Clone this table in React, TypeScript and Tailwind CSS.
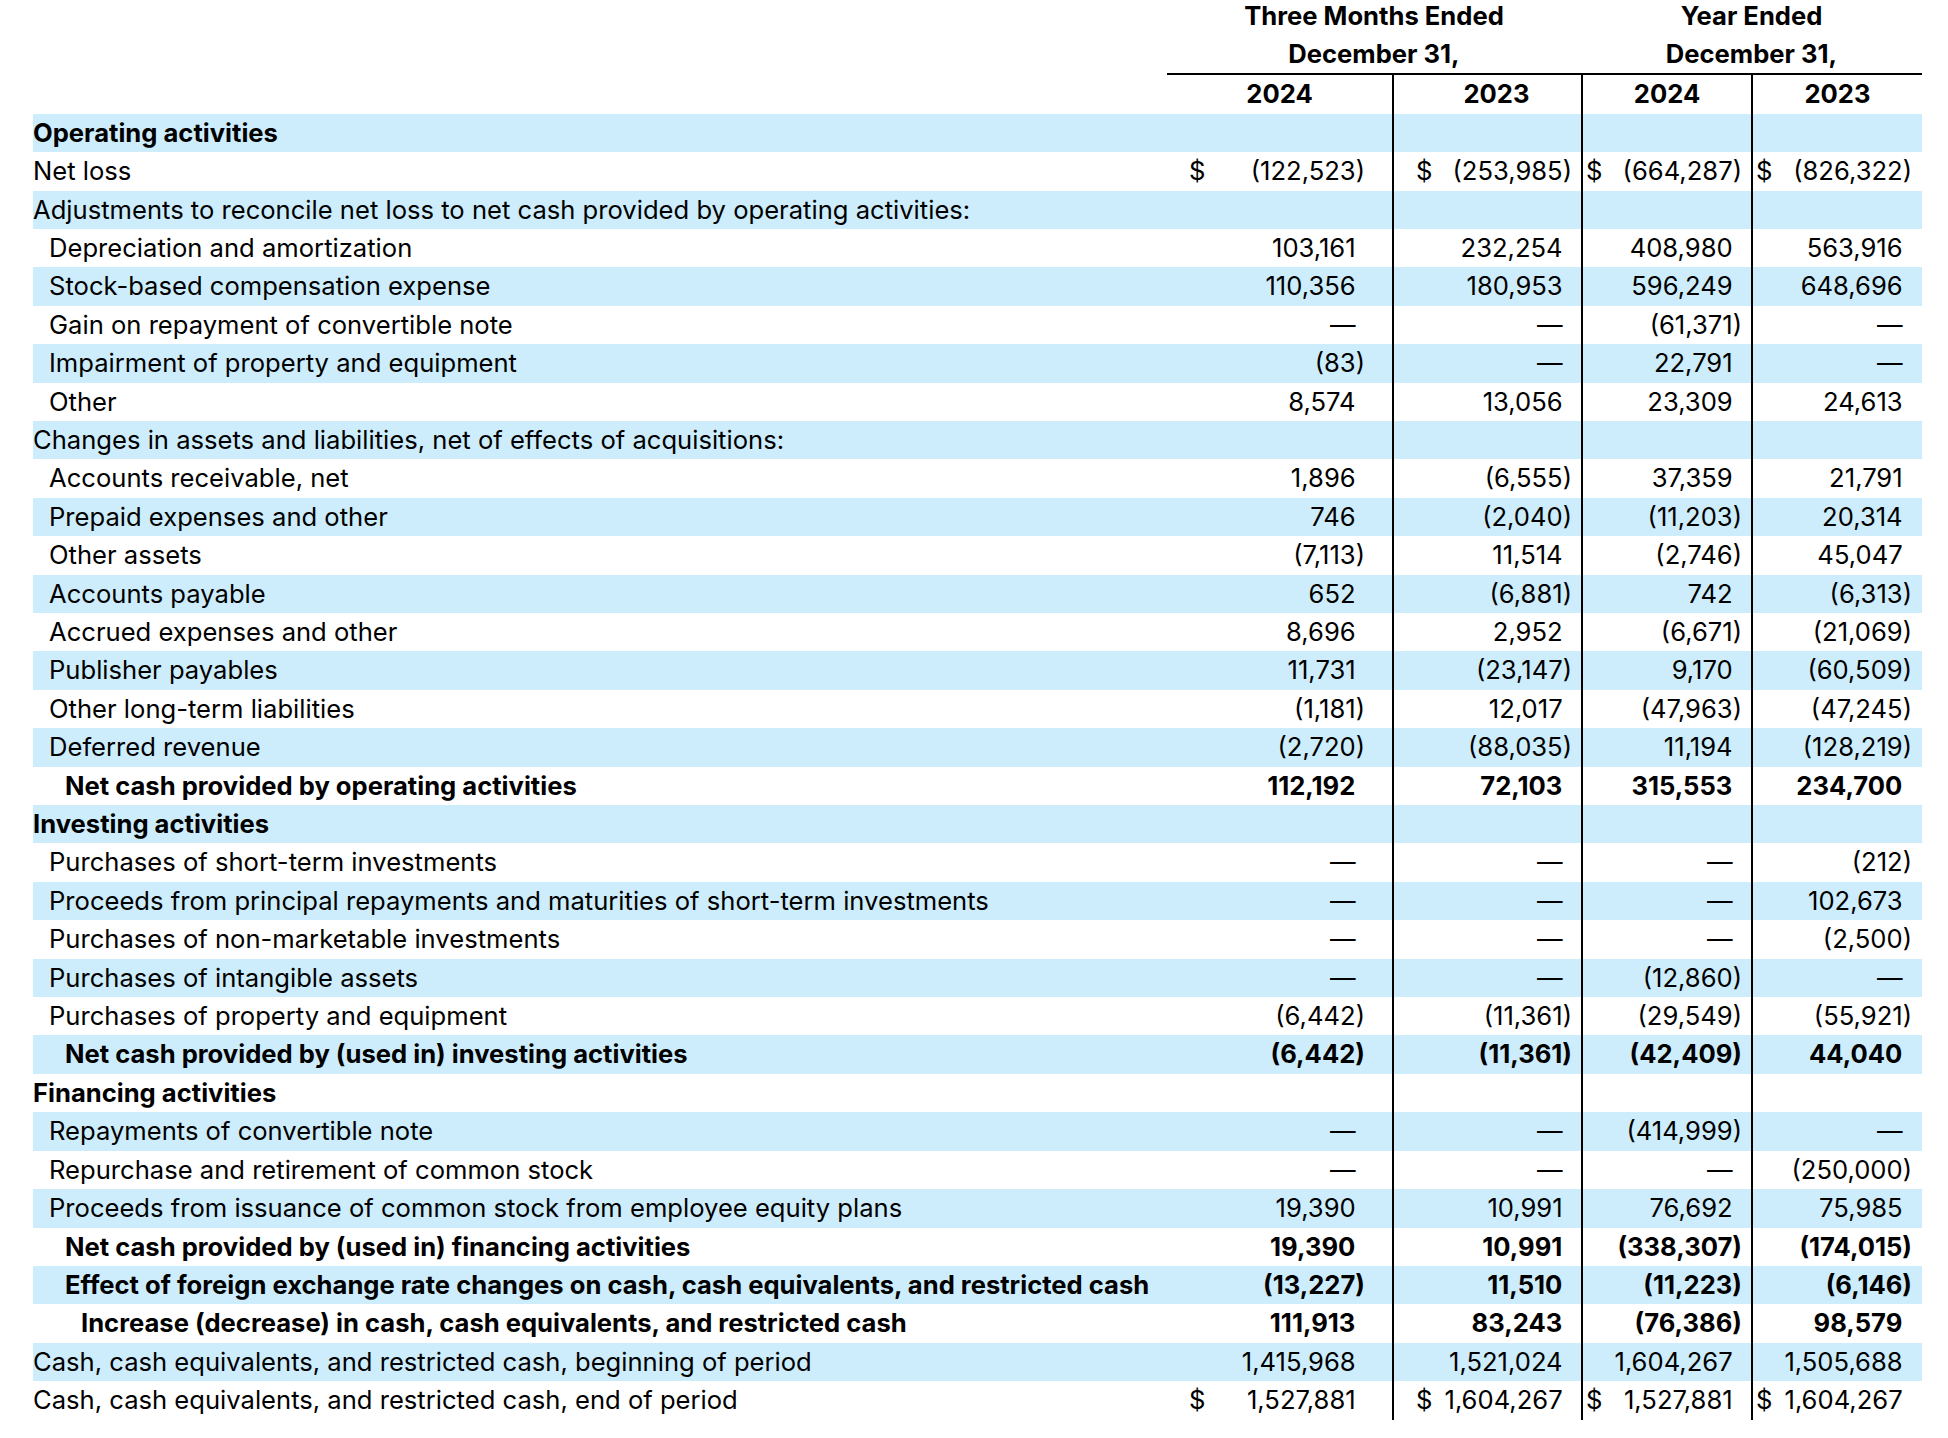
type Row = {
  label: string;
  level?: number;
  bold?: boolean;
  values?: string[];
  dollar?: boolean;
};

const rows: Row[] = [
  { label: 'Operating activities', bold: true },
  { label: 'Net loss', values: ['(122,523)', '(253,985)', '(664,287)', '(826,322)'], dollar: true },
  { label: 'Adjustments to reconcile net loss to net cash provided by operating activities:' },
  { label: 'Depreciation and amortization', level: 1, values: ['103,161', '232,254', '408,980', '563,916'] },
  { label: 'Stock-based compensation expense', level: 1, values: ['110,356', '180,953', '596,249', '648,696'] },
  { label: 'Gain on repayment of convertible note', level: 1, values: ['—', '—', '(61,371)', '—'] },
  { label: 'Impairment of property and equipment', level: 1, values: ['(83)', '—', '22,791', '—'] },
  { label: 'Other', level: 1, values: ['8,574', '13,056', '23,309', '24,613'] },
  { label: 'Changes in assets and liabilities, net of effects of acquisitions:' },
  { label: 'Accounts receivable, net', level: 1, values: ['1,896', '(6,555)', '37,359', '21,791'] },
  { label: 'Prepaid expenses and other', level: 1, values: ['746', '(2,040)', '(11,203)', '20,314'] },
  { label: 'Other assets', level: 1, values: ['(7,113)', '11,514', '(2,746)', '45,047'] },
  { label: 'Accounts payable', level: 1, values: ['652', '(6,881)', '742', '(6,313)'] },
  { label: 'Accrued expenses and other', level: 1, values: ['8,696', '2,952', '(6,671)', '(21,069)'] },
  { label: 'Publisher payables', level: 1, values: ['11,731', '(23,147)', '9,170', '(60,509)'] },
  { label: 'Other long-term liabilities', level: 1, values: ['(1,181)', '12,017', '(47,963)', '(47,245)'] },
  { label: 'Deferred revenue', level: 1, values: ['(2,720)', '(88,035)', '11,194', '(128,219)'] },
  { label: 'Net cash provided by operating activities', level: 2, bold: true, values: ['112,192', '72,103', '315,553', '234,700'] },
  { label: 'Investing activities', bold: true },
  { label: 'Purchases of short-term investments', level: 1, values: ['—', '—', '—', '(212)'] },
  { label: 'Proceeds from principal repayments and maturities of short-term investments', level: 1, values: ['—', '—', '—', '102,673'] },
  { label: 'Purchases of non-marketable investments', level: 1, values: ['—', '—', '—', '(2,500)'] },
  { label: 'Purchases of intangible assets', level: 1, values: ['—', '—', '(12,860)', '—'] },
  { label: 'Purchases of property and equipment', level: 1, values: ['(6,442)', '(11,361)', '(29,549)', '(55,921)'] },
  { label: 'Net cash provided by (used in) investing activities', level: 2, bold: true, values: ['(6,442)', '(11,361)', '(42,409)', '44,040'] },
  { label: 'Financing activities', bold: true },
  { label: 'Repayments of convertible note', level: 1, values: ['—', '—', '(414,999)', '—'] },
  { label: 'Repurchase and retirement of common stock', level: 1, values: ['—', '—', '—', '(250,000)'] },
  { label: 'Proceeds from issuance of common stock from employee equity plans', level: 1, values: ['19,390', '10,991', '76,692', '75,985'] },
  { label: 'Net cash provided by (used in) financing activities', level: 2, bold: true, values: ['19,390', '10,991', '(338,307)', '(174,015)'] },
  { label: 'Effect of foreign exchange rate changes on cash, cash equivalents, and restricted cash', level: 2, bold: true, values: ['(13,227)', '11,510', '(11,223)', '(6,146)'] },
  { label: 'Increase (decrease) in cash, cash equivalents, and restricted cash', level: 3, bold: true, values: ['111,913', '83,243', '(76,386)', '98,579'] },
  { label: 'Cash, cash equivalents, and restricted cash, beginning of period', values: ['1,415,968', '1,521,024', '1,604,267', '1,505,688'] },
  { label: 'Cash, cash equivalents, and restricted cash, end of period', values: ['1,527,881', '1,604,267', '1,527,881', '1,604,267'], dollar: true },
];

const indents = ['pl-0', 'pl-[16px]', 'pl-[32px]', 'pl-[48px]'];

// cell widths, borders and paddings per column
const cols = [
  'w-[225px] pl-[22px] pr-[27px]',
  'w-[189px] border-l-2 border-black pl-[22px] pr-[9px]',
  'w-[170px] border-l-2 border-black pl-[3px] pr-[9px]',
  'w-[171px] border-l-2 border-black pl-[3px] pr-[10px]',
];

function Amount({ value }: { value: string }) {
  const neg = value.endsWith(')');
  return (
    <span className="whitespace-nowrap">
      {value}
      {!neg && <span className="invisible">)</span>}
    </span>
  );
}

export default function App() {
  return (
    <div className="min-h-screen bg-white text-black font-[Inter,sans-serif] text-[25.6px] leading-[38.4px]">
      <div className="pl-[33px] -mt-[3.5px]">
        <div className="flex font-bold">
          <div className="w-[1134px]" />
          <div className="w-[414px] text-center">Three Months Ended</div>
          <div className="w-[341px] text-center">Year Ended</div>
        </div>
        <div className="flex font-bold">
          <div className="w-[1134px]" />
          <div className="w-[414px] text-center">December 31,</div>
          <div className="w-[341px] text-center">December 31,</div>
        </div>
        <div className="flex">
          <div className="w-[1134px]" />
          <div className="flex w-[755px] border-t-2 border-black font-bold">
            <div className="w-[225px] text-center">2024</div>
            <div className="w-[189px] border-l-2 border-black pl-[18px] text-center">2023</div>
            <div className="w-[170px] border-l-2 border-black text-center">2024</div>
            <div className="w-[171px] border-l-2 border-black text-center">2023</div>
          </div>
        </div>

        {rows.map((row, i) => (
          <div
            key={i}
            className={`flex w-[1889px] ${i % 2 === 0 ? 'bg-[#cdedfc]' : 'bg-white'} ${row.bold ? 'font-bold' : ''}`}
          >
            <div className={`w-[1134px] whitespace-nowrap ${indents[row.level ?? 0]}`}>{row.label}</div>
            {cols.map((c, j) => (
              <div key={j} className={`flex justify-between ${c}`}>
                <span>{row.dollar ? '$' : ''}</span>
                {row.values && <Amount value={row.values[j]} />}
              </div>
            ))}
          </div>
        ))}
      </div>
    </div>
  );
}
